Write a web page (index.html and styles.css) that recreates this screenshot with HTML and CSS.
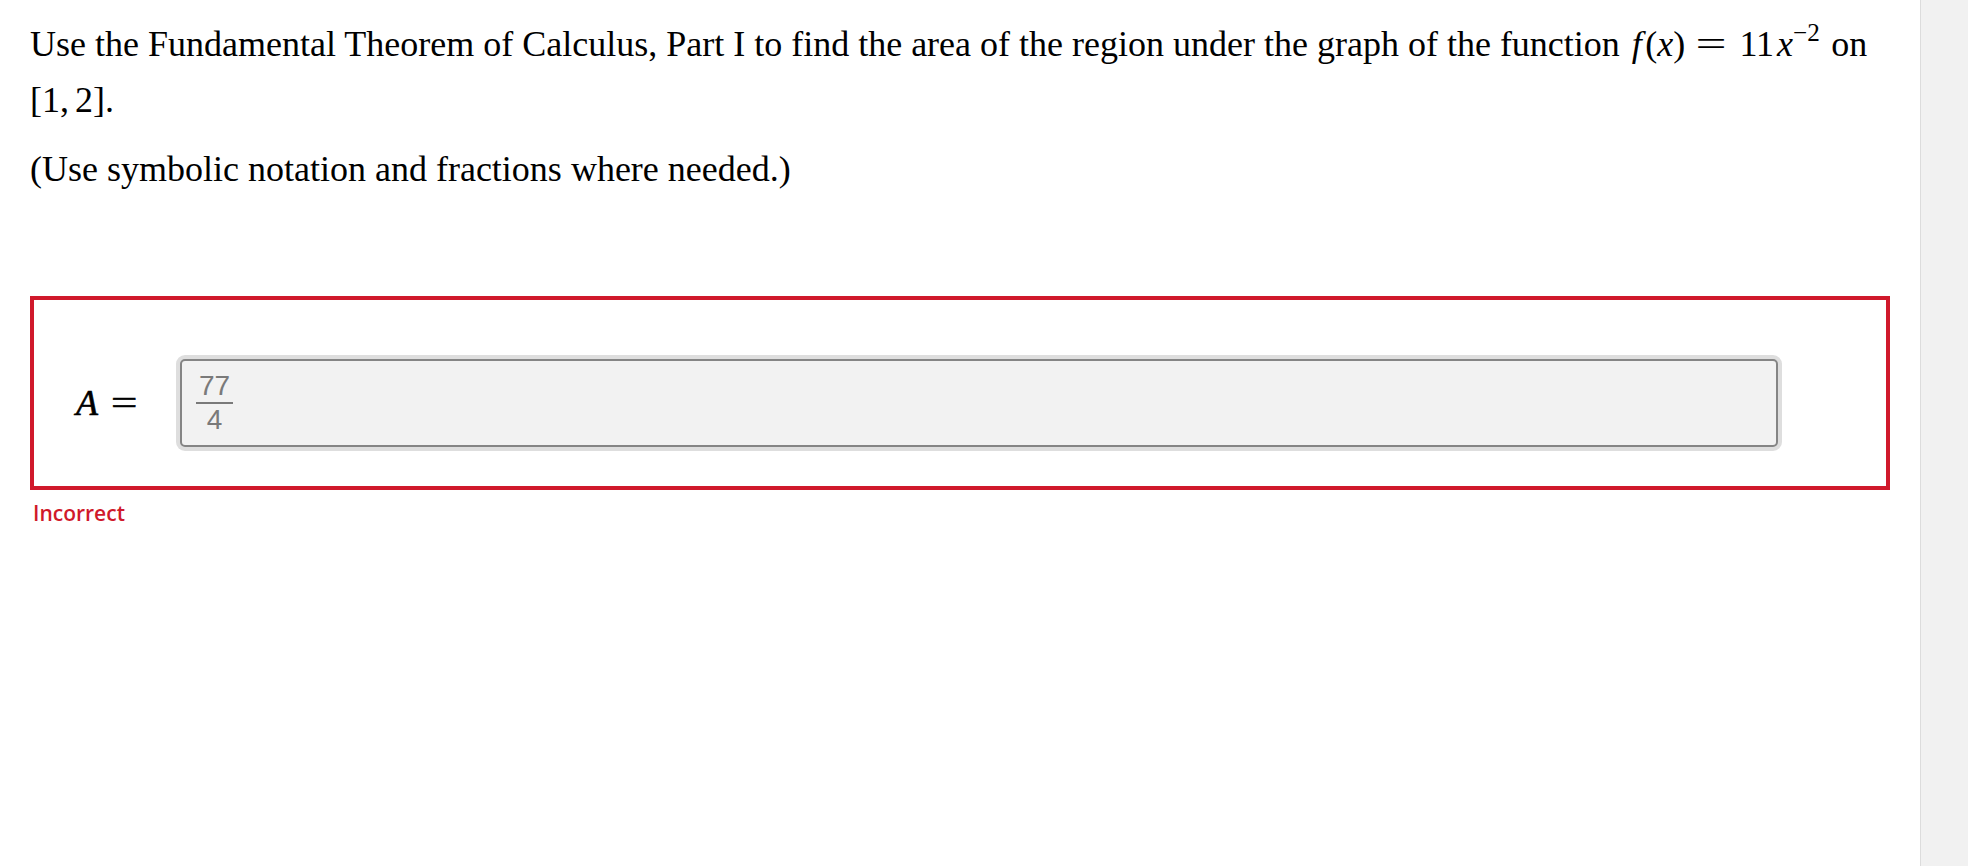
FILE: index.html
```html
<!DOCTYPE html>
<html lang="en">
<head>
<meta charset="utf-8">
<title>Fundamental Theorem of Calculus</title>
<link rel="stylesheet" href="styles.css">
</head>
<body>
<div class="page">
  <main class="content">
    <p class="q">Use the Fundamental Theorem of Calculus, Part I to find the area of the region under the graph of the function <span class="math"><i class="fn">f</i>(<i>x</i>)<span class="rel">=</span>11<i class="xv">x</i><sup>−2</sup></span> on <span class="math">[1,<span class="thin"></span>2]</span>.</p>
    <p class="q">(Use symbolic notation and fractions where needed.)</p>
    <div class="answer">
      <span class="label"><i>A</i><span class="rel">=</span></span>
      <div class="input">
        <span class="frac"><span class="num">77</span><span class="den">4</span></span>
      </div>
    </div>
    <div class="status">Incorrect</div>
  </main>
  <div class="scrollbar"></div>
</div>
</body>
</html>
```
FILE: styles.css
```css
html, body {
  margin: 0;
  padding: 0;
  background: #fff;
}
.page {
  display: flex;
  height: 866px;
  overflow: hidden;
}
.content {
  flex: 1;
  padding: 16px 30px 0 30px;
  font-family: "Liberation Serif", "Times New Roman", serif;
  color: #000;
}
.q {
  margin: 0 0 13px 0;
  font-size: 36px;
  line-height: 56px;
}
.math {
  white-space: nowrap;
}
.math i {
  font-style: italic;
}
.fn {
  padding: 0 0.1em 0 0.08em;
}
.xv {
  padding-left: 0.08em;
}
.rel {
  display: inline-block;
  width: 0.564em;
  text-align: center;
  transform: scaleX(1.53);
  margin: 0 0.5em 0 0.44em;
}
.thin {
  display: inline-block;
  width: 0.17em;
}
sup {
  font-size: 0.7em;
  line-height: 0;
  vertical-align: 0.6em;
  margin-left: 0;
  margin-right: 0.1em;
}
.answer {
  margin-top: 99px;
  border: 4px solid #d0192b;
  padding: 59px 108px 39px 42px;
  display: flex;
  align-items: center;
}
.label {
  font-size: 36px;
  font-family: "Liberation Serif", serif;
  width: 104px;
  flex: none;
  -webkit-text-stroke: 0.6px #000;
}
.label .rel {
  transform: scaleX(1.3);
  margin: 0 0 0 0.44em;
}
.input {
  flex: 1;
  height: 88px;
  box-sizing: border-box;
  background: #f2f2f2;
  border: 2px solid #858585;
  border-radius: 5px;
  box-shadow: 0 0 0 4px #dedede;
  display: flex;
  align-items: center;
  padding-left: 14px;
}
.frac {
  display: inline-flex;
  flex-direction: column;
  align-items: center;
  font-family: "Liberation Sans", Arial, sans-serif;
  color: #7a7a7a;
  font-size: 28px;
  line-height: 28px;
}
.num {
  padding: 0 3px 2px;
  border-bottom: 2px solid #7a7a7a;
}
.den {
  padding-top: 2px;
}
.status {
  margin-top: 9px;
  margin-left: 3px;
  font-family: "Open Sans", "Noto Sans", sans-serif;
  font-weight: 600;
  font-size: 21px;
  color: #d0192b;
}
.scrollbar {
  width: 47px;
  flex: none;
  background: #f1f1f1;
  border-left: 1px solid #dcdcdc;
}
```
